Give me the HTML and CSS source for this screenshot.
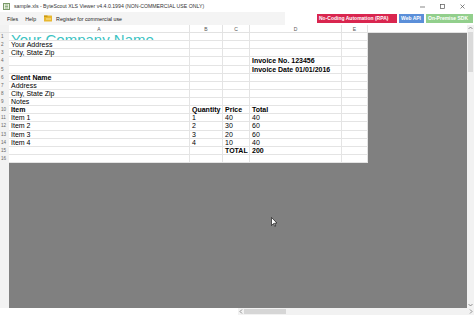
FILE: index.html
```html
<!DOCTYPE html>
<html lang="en">
<head>
    <meta charset="UTF-8">
    <title>sample.xls - ByteScout XLS Viewer</title>
    <link rel="stylesheet" href="styles.css">
</head>
<body>
    <div class="window">
        <!-- Title bar -->
        <div class="titlebar">
            <svg class="appicon" width="7" height="7" viewBox="0 0 7 7"><rect x="0.5" y="0.5" width="6" height="6" fill="#e8f0e0" stroke="#7a9a6a"/><path d="M2 2h3M2 3.5h3M2 5h3" stroke="#5a8a4a" stroke-width="0.6"/></svg>
            <span class="title">sample.xls - ByteScout XLS Viewer v4.4.0.1994 (NON-COMMERCIAL USE ONLY)</span>
            <div class="winbtns">
                <svg width="7" height="7" viewBox="0 0 7 7"><path d="M1 4h5" stroke="#555" stroke-width="0.7"/></svg>
                <svg width="7" height="7" viewBox="0 0 7 7"><rect x="1.5" y="1.5" width="4" height="4" fill="none" stroke="#555" stroke-width="0.7"/></svg>
                <svg width="7" height="7" viewBox="0 0 7 7"><path d="M1.5 1.5l4 4M5.5 1.5l-4 4" stroke="#555" stroke-width="0.7"/></svg>
            </div>
        </div>

        <!-- Menu bar -->
        <div class="menubar">
            <div class="menus">
                <span class="menu">Files</span>
                <span class="menu">Help</span>
                <span class="register">
                    <svg width="9" height="7" viewBox="0 0 9 7"><rect x="0" y="0.5" width="8" height="6" rx="0.5" fill="#e8b830"/><rect x="0" y="0.5" width="3.5" height="1.5" fill="#c89818"/><path d="M2 4h5" stroke="#fff3c0" stroke-width="0.8"/></svg>
                    Register for commercial use
                </span>
            </div>
            <div class="promo">
                <span class="tag red">No-Coding Automation (RPA)</span>
                <span class="tag blue">Web API</span>
                <span class="tag green">On-Premise SDK</span>
            </div>
        </div>

        <div class="content">
            <div class="pane">
                <!-- Column headers -->
                <div class="colheads">
                    <div class="corner"></div>
                    <div class="ch ca">A</div>
                    <div class="ch cb">B</div>
                    <div class="ch cc">C</div>
                    <div class="ch cd">D</div>
                    <div class="ch ce">E</div>
                </div>

                <!-- Sheet -->
                <div class="body">
                    <div class="row"><div class="num">1</div><div class="c ca big"><span>Your Company Name</span></div><div class="c cb"></div><div class="c cc"></div><div class="c cd"></div><div class="c ce"></div></div>
                    <div class="row"><div class="num">2</div><div class="c ca">Your Address</div><div class="c cb"></div><div class="c cc"></div><div class="c cd"></div><div class="c ce"></div></div>
                    <div class="row"><div class="num">3</div><div class="c ca">City, State Zip</div><div class="c cb"></div><div class="c cc"></div><div class="c cd"></div><div class="c ce"></div></div>
                    <div class="row"><div class="num">4</div><div class="c ca"></div><div class="c cb"></div><div class="c cc"></div><div class="c cd b">Invoice No. 123456</div><div class="c ce"></div></div>
                    <div class="row"><div class="num">5</div><div class="c ca"></div><div class="c cb"></div><div class="c cc"></div><div class="c cd b">Invoice Date 01/01/2016</div><div class="c ce"></div></div>
                    <div class="row"><div class="num">6</div><div class="c ca b">Client Name</div><div class="c cb"></div><div class="c cc"></div><div class="c cd"></div><div class="c ce"></div></div>
                    <div class="row"><div class="num">7</div><div class="c ca">Address</div><div class="c cb"></div><div class="c cc"></div><div class="c cd"></div><div class="c ce"></div></div>
                    <div class="row"><div class="num">8</div><div class="c ca">City, State Zip</div><div class="c cb"></div><div class="c cc"></div><div class="c cd"></div><div class="c ce"></div></div>
                    <div class="row"><div class="num">9</div><div class="c ca">Notes</div><div class="c cb"></div><div class="c cc"></div><div class="c cd"></div><div class="c ce"></div></div>
                    <div class="row"><div class="num">10</div><div class="c ca b">Item</div><div class="c cb b">Quantity</div><div class="c cc b">Price</div><div class="c cd b">Total</div><div class="c ce"></div></div>
                    <div class="row"><div class="num">11</div><div class="c ca">Item 1</div><div class="c cb">1</div><div class="c cc">40</div><div class="c cd">40</div><div class="c ce"></div></div>
                    <div class="row"><div class="num">12</div><div class="c ca">Item 2</div><div class="c cb">2</div><div class="c cc">30</div><div class="c cd">60</div><div class="c ce"></div></div>
                    <div class="row"><div class="num">13</div><div class="c ca">Item 3</div><div class="c cb">3</div><div class="c cc">20</div><div class="c cd">60</div><div class="c ce"></div></div>
                    <div class="row"><div class="num">14</div><div class="c ca">Item 4</div><div class="c cb">4</div><div class="c cc">10</div><div class="c cd">40</div><div class="c ce"></div></div>
                    <div class="row"><div class="num">15</div><div class="c ca"></div><div class="c cb"></div><div class="c cc b">TOTAL</div><div class="c cd b">200</div><div class="c ce"></div></div>
                    <div class="row"><div class="num">16</div><div class="c ca"></div><div class="c cb"></div><div class="c cc"></div><div class="c cd"></div><div class="c ce"></div></div>
                </div>
            </div>

            <!-- Vertical scrollbar -->
            <div class="vscroll">
                <svg width="7" height="6" viewBox="0 0 7 6"><path d="M1.5 4l2-2 2 2" fill="none" stroke="#666" stroke-width="0.7"/></svg>
                <div class="vthumb"></div>
                <div class="vtrack"></div>
                <svg width="7" height="6" viewBox="0 0 7 6"><path d="M1.5 2l2 2 2-2" fill="none" stroke="#666" stroke-width="0.7"/></svg>
            </div>
        </div>

        <!-- Status bar -->
        <div class="statusbar">
            <div class="sheettabs"><span class="tab">Page 1</span></div>
            <div class="hscroll">
                <svg width="6" height="7" viewBox="0 0 6 7"><path d="M4 1.5l-2 2 2 2" fill="none" stroke="#666" stroke-width="0.7"/></svg>
                <div class="hthumb"></div>
                <div class="htrack"></div>
                <svg width="6" height="7" viewBox="0 0 6 7"><path d="M2 1.5l2 2-2 2" fill="none" stroke="#666" stroke-width="0.7"/></svg>
            </div>
        </div>

        <svg class="cursor" width="6" height="10" viewBox="0 0 6 10"><path d="M0.5 0.5v8l2-2 1.3 3 1-0.5-1.3-2.8h2.5z" fill="#fff" stroke="#000" stroke-width="0.6"/></svg>
    </div>
</body>
</html>
```

FILE: styles.css
```css
body{
    margin: 0;
    font-family: "Liberation Sans", Arial, sans-serif;
    background-color: white;
}
.window{
    position: relative;
    width: 474px;
    height: 315px;
    overflow: hidden;
    display: flex;
    flex-direction: column;
}

/* title bar */
.titlebar{
    height: 12px;
    display: flex;
    align-items: center;
    background-color: white;
    padding-left: 3px;
}
.appicon{
    margin-right: 4px;
}
.title{
    font-size: 5.2px;
    color: #333;
}
.winbtns{
    margin-left: auto;
    display: flex;
    gap: 13px;
    padding-right: 8px;
}

/* menu bar */
.menubar{
    height: 13px;
    display: flex;
    align-items: center;
    background: linear-gradient(to right, #f4f4f4 285px, white 285px);
}
.menus{
    display: flex;
    align-items: center;
    font-size: 5.3px;
    color: #222;
    padding-left: 7px;
}
.menu{
    margin-right: 7px;
}
.register{
    display: flex;
    align-items: center;
    gap: 3px;
    margin-left: 1px;
}
.promo{
    margin-left: auto;
    display: flex;
    gap: 2px;
    padding-right: 1px;
}
.tag{
    height: 9px;
    line-height: 9px;
    padding: 0 2px;
    font-size: 5px;
    font-weight: bold;
    color: white;
}
.red{
    background-color: #d9264f;
    width: 76px;
}
.blue{
    background-color: #5b8fd9;
    width: 21px;
}
.green{
    background-color: #92cf8c;
    width: 43px;
}

/* sheet area */
.content{
    flex: 1;
    display: flex;
    min-height: 0;
}
.pane{
    flex: 1;
    display: flex;
    flex-direction: column;
}
.colheads{
    height: 8px;
    display: flex;
    background-color: white;
    border-bottom: 1px solid #e2e2e2;
    box-sizing: border-box;
    font-size: 5px;
    color: #555;
}
.corner{
    width: 9px;
    background-color: #f2f2f2;
}
.ch{
    text-align: center;
    line-height: 8px;
    border-right: 1px solid #e2e2e2;
    box-sizing: border-box;
}
.body{
    flex: 1;
    background: linear-gradient(to right, #f2f2f2 9px, #808080 9px);
}
.row{
    display: flex;
    height: 8.125px;
}
.num{
    width: 9px;
    font-size: 4.6px;
    color: #666;
    line-height: 8px;
    padding-left: 1px;
    box-sizing: border-box;
    background-color: #f2f2f2;
}
.c{
    background-color: white;
    border-right: 1px solid #e4e4e4;
    border-bottom: 1px solid #e4e4e4;
    box-sizing: border-box;
    font-size: 7px;
    line-height: 7.5px;
    color: #000;
    padding-left: 2px;
    white-space: nowrap;
}
.b{
    font-weight: bold;
}
.ca{ width: 181px; }
.cb{ width: 33px; }
.cc{ width: 27px; }
.cd{ width: 92px; }
.ce{ width: 26px; }
.big{
    overflow: hidden;
}
.big span{
    display: block;
    font-size: 15px;
    line-height: 15px;
    margin-top: -1.5px;
    color: #3cc3c3;
}

/* scrollbars */
.vscroll{
    width: 7px;
    display: flex;
    flex-direction: column;
    background-color: #f2f2f2;
}
.vthumb{
    height: 40px;
    margin: 1px 1px 0;
    background-color: #dadada;
}
.vtrack{
    flex: 1;
}
.statusbar{
    height: 7px;
    display: flex;
    background-color: #f2f2f2;
}
.sheettabs{
    width: 238px;
    background-color: white;
}
.tab{
    display: inline-block;
    margin-left: 2px;
    padding: 0 1px;
    height: 6px;
    line-height: 6px;
    font-size: 4.5px;
    color: #222;
    border: 1px solid #999;
    border-top: none;
    background-color: white;
}
.hscroll{
    flex: 1;
    display: flex;
    align-items: center;
}
.hthumb{
    width: 42px;
    height: 5px;
    background-color: #d6d6d6;
}
.htrack{
    flex: 1;
}
.cursor{
    position: absolute;
    left: 271px;
    top: 217px;
}
```
